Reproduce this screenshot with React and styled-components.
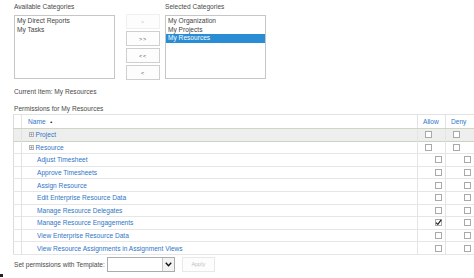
import React from 'react'
import styled, { createGlobalStyle } from 'styled-components';

const GlobalStyle = createGlobalStyle`
    html, body {
        margin: 0;
        padding: 0;
        background: #ffffff;
        overflow: hidden;
    }
    body {
        font-family: "Liberation Sans", Arial, sans-serif;
        font-size: 6.6px;
        color: #444444;
    }
`;

const permissions = [
    { name: 'Project', group: true, shaded: true },
    { name: 'Resource', group: true },
    { name: 'Adjust Timesheet' },
    { name: 'Approve Timesheets' },
    { name: 'Assign Resource' },
    { name: 'Edit Enterprise Resource Data' },
    { name: 'Manage Resource Delegates' },
    { name: 'Manage Resource Engagements', allow: true },
    { name: 'View Enterprise Resource Data' },
    { name: 'View Resource Assignments in Assignment Views' },
];

function Check({ checked }) {
    return (
        <Box>
            {checked && (
                <svg width="7" height="7" viewBox="0 0 7 7">
                    <path d="M1 3.6 L2.8 5.4 L6.2 0.8" fill="none" stroke="#222" strokeWidth="1.2" />
                </svg>
            )}
        </Box>
    )
}

function Expander() {
    return (
        <svg width="5" height="5" viewBox="0 0 5 5">
            <rect x="0.5" y="0.5" width="4" height="4" fill="#f6f6f6" stroke="#b0b0b0" />
            <path d="M1.3 2.5 H3.7 M2.5 1.3 V3.7" stroke="#8a8a8a" strokeWidth="0.7" />
        </svg>
    )
}

function App() {
    return (
        <PageStyled>
            <GlobalStyle />
            <div className="chooser">
                <div className="category">
                    <Label>Available Categories</Label>
                    <ListBox>
                        <Option>My Direct Reports</Option>
                        <Option>My Tasks</Option>
                    </ListBox>
                </div>
                <div className="moves">
                    <MoveButton disabled>&gt;</MoveButton>
                    <MoveButton>&gt;&gt;</MoveButton>
                    <MoveButton>&lt;&lt;</MoveButton>
                    <MoveButton>&lt;</MoveButton>
                </div>
                <div className="category">
                    <Label>Selected Categories</Label>
                    <ListBox>
                        <Option>My Organization</Option>
                        <Option>My Projects</Option>
                        <Option selected>My Resources</Option>
                    </ListBox>
                </div>
            </div>

            <Label className="current">Current Item: My Resources</Label>
            <Label className="heading">Permissions for My Resources</Label>

            <Table>
                <colgroup>
                    <col style={{ width: 8 }} />
                    <col style={{ width: 396 }} />
                    <col style={{ width: 28 }} />
                    <col style={{ width: 36 }} />
                </colgroup>
                <thead>
                    <tr>
                        <HeadCell />
                        <HeadCell className="name">Name <span className="sort">▲</span></HeadCell>
                        <HeadCell $divided>Allow</HeadCell>
                        <HeadCell $divided>Deny</HeadCell>
                    </tr>
                </thead>
                <tbody>
                    {permissions.map((p) => (
                        <Row key={p.name} $shaded={p.shaded}>
                            <Cell />
                            <Cell>
                                {p.group ? (
                                    <GroupName><Expander />{p.name}</GroupName>
                                ) : (
                                    <ItemName>{p.name}</ItemName>
                                )}
                            </Cell>
                            <Cell $divided $inset={p.group ? 7 : 17}><Check checked={p.allow} /></Cell>
                            <Cell $divided $inset={p.group ? 7 : 18}><Check /></Cell>
                        </Row>
                    ))}
                </tbody>
            </Table>

            <div className="template">
                <Label>Set permissions with Template:</Label>
                <Select>
                    <span className="arrow">
                        <svg width="7" height="5" viewBox="0 0 7 5">
                            <path d="M0.8 0.8 L3.5 3.8 L6.2 0.8" fill="none" stroke="#111" strokeWidth="1.4" />
                        </svg>
                    </span>
                </Select>
                <ApplyButton disabled>Apply</ApplyButton>
            </div>
            <Corner />
        </PageStyled>
    )
}

const PageStyled = styled.div`
    position: relative;
    width: 474px;
    height: 278px;
    padding: 2px 0 0 13px;
    box-sizing: border-box;

    .chooser{
        display: flex;
        align-items: flex-start;
        padding-left: 1px;
    }
    .category{
        display: flex;
        flex-direction: column;
    }
    .moves{
        display: flex;
        flex-direction: column;
        gap: 2px;
        margin: 12px 5px 0 11px;
    }
    .current{
        margin: 7px 0 0 1px;
    }
    .heading{
        margin: 8px 0 1px 1px;
    }
    .template{
        display: flex;
        align-items: center;
        margin: 2px 0 0 1px;
    }
`;

const Label = styled.div`
    line-height: 9px;
    color: #4a4a4a;
    white-space: nowrap;
    margin-bottom: 4px;
    .template &{
        margin: 0 2px 0 0;
    }
`;

const ListBox = styled.div`
    width: 101px;
    height: 64px;
    box-sizing: border-box;
    border: 1px solid #c6c6c6;
    padding-top: 1px;
    background: #fff;
`;

const Option = styled.div`
    line-height: 8.5px;
    padding-left: 2px;
    color: ${p => p.selected ? '#ffffff' : '#444444'};
    background: ${p => p.selected ? '#2a8dd4' : 'transparent'};
`;

const MoveButton = styled.button`
    width: 34px;
    height: 15px;
    padding: 0;
    font-family: inherit;
    font-size: 5.5px;
    letter-spacing: 0.8px;
    color: ${p => p.disabled ? '#c4c4c4' : '#555555'};
    background: #fdfdfd;
    border: 1px solid ${p => p.disabled ? '#f0f0f0' : '#cfcfcf'};
    border-radius: 0;
`;

const Table = styled.table`
    width: 468px;
    table-layout: fixed;
    border-collapse: collapse;
    border-left: 1px solid #dcdcdc;
    border-top: 1px solid #e2e2e2;
    border-bottom: 1px solid #d6d6d6;
`;

const HeadCell = styled.th`
    height: 13px;
    padding: 0 0 0 ${p => p.$divided ? '5px' : '0'};
    text-align: left;
    font-weight: normal;
    color: #2f76c6;
    border-bottom: 1px solid #cdd6c4;
    border-left: ${p => p.$divided ? '1px solid #e2e2e2' : 'none'};
    &:first-child{
        border-right: 1px solid #e2e2e2;
    }
    &.name{
        padding-left: 6px;
    }
    .sort{
        font-size: 3.5px;
        color: #222;
        vertical-align: middle;
        margin-left: 2px;
    }
`;

const Row = styled.tr`
    height: 12.6px;
    background: ${p => p.$shaded ? '#eeeeee' : 'transparent'};
    border-bottom: 1px solid ${p => p.$shaded ? '#c9d6bc' : '#e6e6e6'};
`;

const Cell = styled.td`
    padding: 0 0 0 ${p => p.$inset ? `${p.$inset}px` : '0'};
    vertical-align: middle;
    border-left: ${p => p.$divided ? '1px solid #e4e4e4' : 'none'};
    &:first-child{
        border-right: 1px solid #e2e2e2;
    }
`;

const GroupName = styled.span`
    display: flex;
    align-items: center;
    gap: 1.5px;
    padding-left: 7px;
    color: #2f76c6;
`;

const ItemName = styled.span`
    padding-left: 15px;
    color: #2f76c6;
`;

const Box = styled.span`
    display: block;
    width: 7px;
    height: 7px;
    box-sizing: border-box;
    border: 1px solid #a9a9a9;
    background: #fff;
    svg{
        display: block;
        margin: -1px;
    }
`;

const Select = styled.div`
    width: 68px;
    height: 15px;
    box-sizing: border-box;
    border: 1px solid #ababab;
    background: #fff;
    display: flex;
    justify-content: flex-end;
    .arrow{
        width: 11px;
        display: flex;
        align-items: center;
        justify-content: center;
        border-left: 1px solid #c8c8c8;
        background: #f3f3f3;
    }
`;

const ApplyButton = styled.button`
    width: 33px;
    height: 15px;
    margin-left: 7px;
    padding: 0;
    font-family: inherit;
    font-size: 5.5px;
    color: #c0c0c0;
    background: #fdfdfd;
    border: 1px solid #e8e8e8;
    border-radius: 0;
`;

const Corner = styled.span`
    position: absolute;
    left: 0;
    bottom: 1px;
    width: 3px;
    height: 3px;
    background: #222;
`;

export default App;
